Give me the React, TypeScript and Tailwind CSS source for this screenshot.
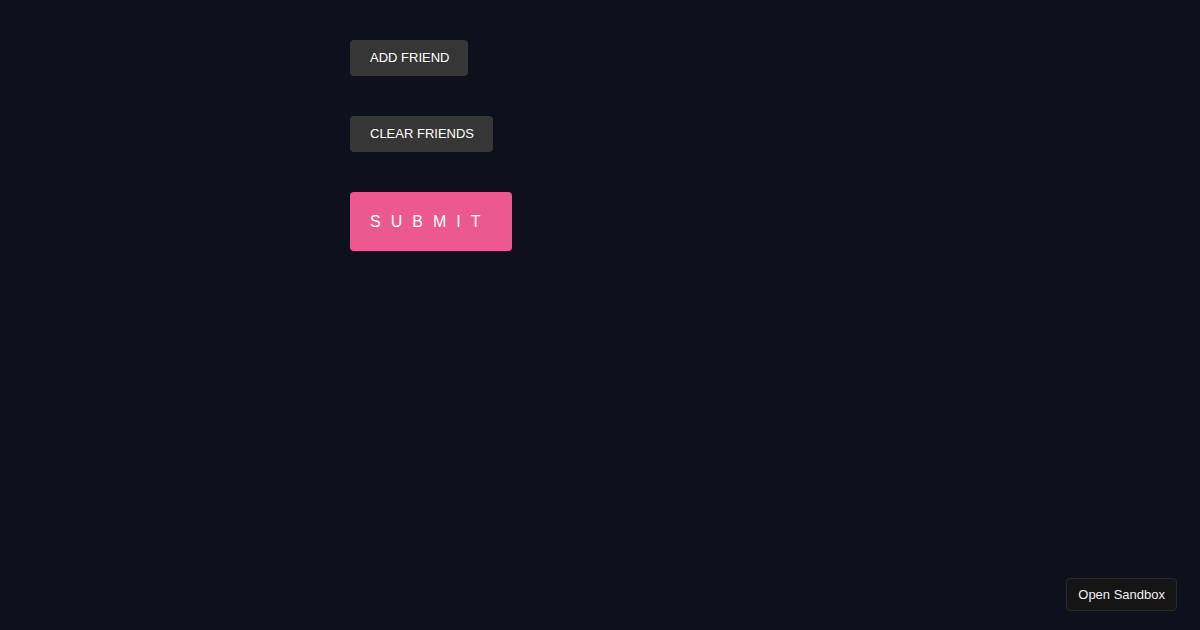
export default function App() {
  return (
    <div className="relative h-[630px] w-[1200px] bg-[#0e101c] font-['Liberation_Sans',Arial,sans-serif] text-white">
      <div className="flex flex-col items-start gap-10 pl-[350px] pt-10">
        <button className="h-9 rounded bg-[#363636] pl-5 pr-[19px] text-[13px] uppercase text-white">
          Add Friend
        </button>
        <button className="h-9 rounded bg-[#363636] pl-5 pr-[19px] text-[13px] uppercase text-white">
          Clear Friends
        </button>
        <button className="h-[59px] rounded bg-[#ec5990] pl-5 pr-[22px] text-base uppercase tracking-[10px] text-white">
          Submit
        </button>
      </div>
      <button className="absolute bottom-[19px] right-[23px] h-[33px] rounded border border-[#2a2a2a] bg-[#151515] px-[11px] text-[13px] text-[#f0f0f0]">
        Open Sandbox
      </button>
    </div>
  );
}
